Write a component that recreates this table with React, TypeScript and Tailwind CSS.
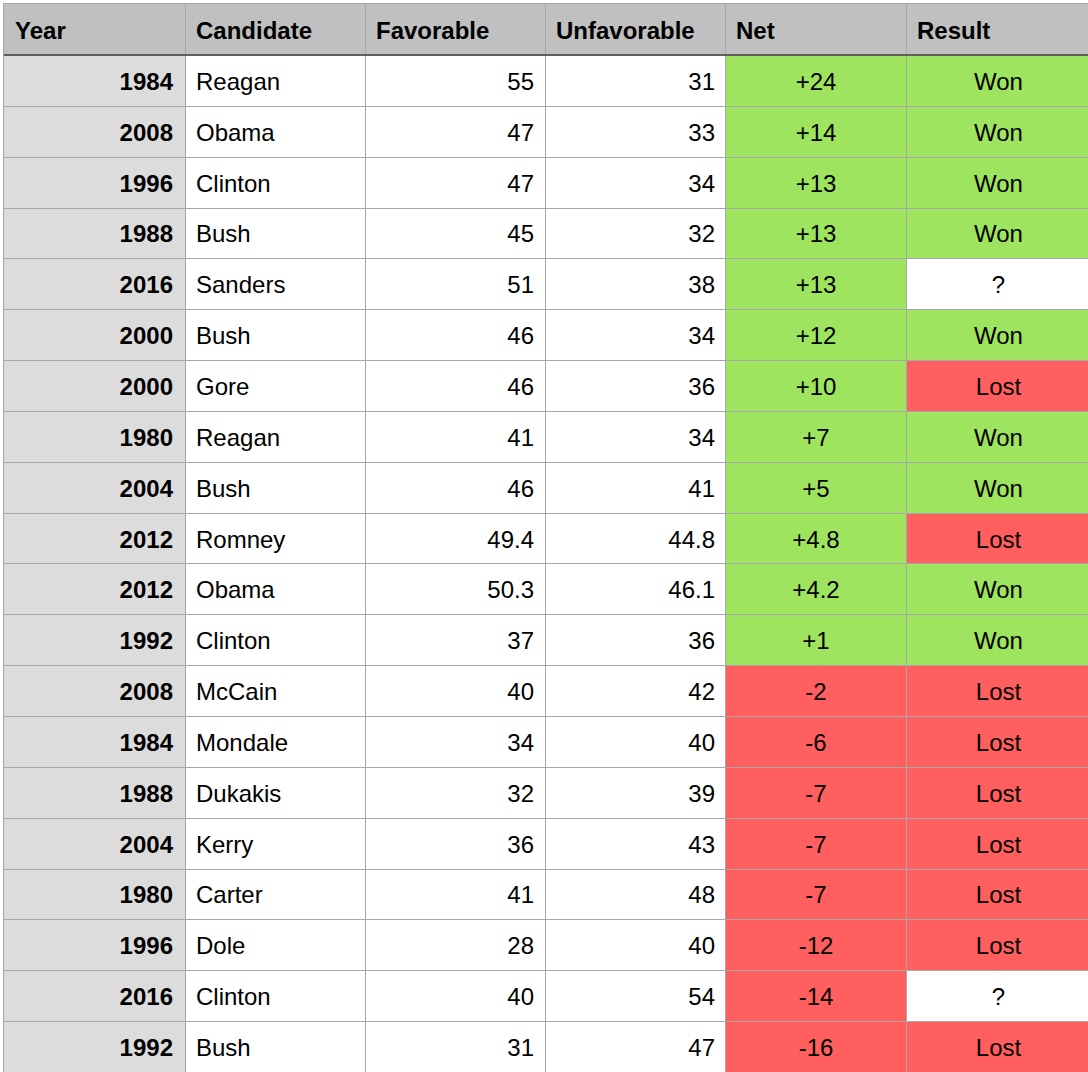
import React from "react";

type Row = [string, string, string, string, string, string];

const rows: Row[] = [
  ["1984", "Reagan", "55", "31", "+24", "Won"],
  ["2008", "Obama", "47", "33", "+14", "Won"],
  ["1996", "Clinton", "47", "34", "+13", "Won"],
  ["1988", "Bush", "45", "32", "+13", "Won"],
  ["2016", "Sanders", "51", "38", "+13", "?"],
  ["2000", "Bush", "46", "34", "+12", "Won"],
  ["2000", "Gore", "46", "36", "+10", "Lost"],
  ["1980", "Reagan", "41", "34", "+7", "Won"],
  ["2004", "Bush", "46", "41", "+5", "Won"],
  ["2012", "Romney", "49.4", "44.8", "+4.8", "Lost"],
  ["2012", "Obama", "50.3", "46.1", "+4.2", "Won"],
  ["1992", "Clinton", "37", "36", "+1", "Won"],
  ["2008", "McCain", "40", "42", "-2", "Lost"],
  ["1984", "Mondale", "34", "40", "-6", "Lost"],
  ["1988", "Dukakis", "32", "39", "-7", "Lost"],
  ["2004", "Kerry", "36", "43", "-7", "Lost"],
  ["1980", "Carter", "41", "48", "-7", "Lost"],
  ["1996", "Dole", "28", "40", "-12", "Lost"],
  ["2016", "Clinton", "40", "54", "-14", "?"],
  ["1992", "Bush", "31", "47", "-16", "Lost"],
];

const GREEN = "bg-[#9ee45e]";
const RED = "bg-[#ff5f5f]";

export default function App() {
  return (
    <div
      className="w-[1088px] h-[1072px] overflow-hidden bg-white pl-[3px] pt-[3px] text-[24px] text-black"
      style={{ fontFamily: '"Liberation Sans", Arial, Helvetica, sans-serif' }}
    >
      <div className="border-l border-t border-[#a7a7a7] w-[1086px]">
        <div className="flex h-[52px] bg-[#bfc0bf] border-b-2 border-[#5d5d5d] font-bold">
          <div className="w-[182px] shrink-0 border-r border-[#a7a7a7] flex items-center pl-[11px] pt-[3px]">Year</div>
          <div className="w-[180px] shrink-0 border-r border-[#a7a7a7] flex items-center pl-[10px] pt-[3px]">Candidate</div>
          <div className="w-[180px] shrink-0 border-r border-[#a7a7a7] flex items-center pl-[10px] pt-[3px]">Favorable</div>
          <div className="w-[180px] shrink-0 border-r border-[#a7a7a7] flex items-center pl-[10px] pt-[3px]">Unfavorable</div>
          <div className="w-[181px] shrink-0 border-r border-[#a7a7a7] flex items-center pl-[10px] pt-[3px]">Net</div>
          <div className="w-[183px] shrink-0 flex items-center pl-[10px] pt-[3px]">Result</div>
        </div>
        {rows.map((r, i) => {
          const netPositive = r[4].startsWith("+");
          const resBg = r[5] === "Won" ? GREEN : r[5] === "Lost" ? RED : "bg-white";
          return (
            <div key={i} className="flex h-[50.85px]">
              <div className="w-[182px] shrink-0 bg-[#dcdcdc] border-r border-b border-[#a7a7a7] flex items-center justify-end pr-[12px] pt-[2px] font-bold">
                {r[0]}
              </div>
              <div className="w-[180px] shrink-0 bg-white border-r border-b border-[#a7a7a7] flex items-center pl-[10px] pt-[2px]">
                {r[1]}
              </div>
              <div className="w-[180px] shrink-0 bg-white border-r border-b border-[#a7a7a7] flex items-center justify-end pr-[11px] pt-[2px]">
                {r[2]}
              </div>
              <div className="w-[180px] shrink-0 bg-white border-r border-b border-[#a7a7a7] flex items-center justify-end pr-[10px] pt-[2px]">
                {r[3]}
              </div>
              <div
                className={`w-[181px] shrink-0 border-r border-b border-[#a7a7a7] flex items-center justify-center pt-[2px] ${netPositive ? GREEN : RED}`}
              >
                {r[4]}
              </div>
              <div className={`w-[183px] shrink-0 border-b border-[#a7a7a7] flex items-center justify-center pt-[2px] ${resBg}`}>
                {r[5]}
              </div>
            </div>
          );
        })}
      </div>
    </div>
  );
}
